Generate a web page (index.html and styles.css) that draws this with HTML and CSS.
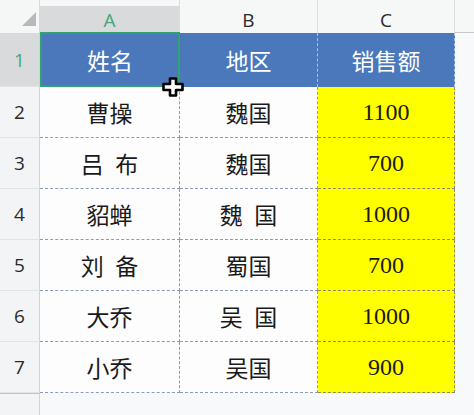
FILE: index.html
```html
<!DOCTYPE html>
<html lang="zh">
<head>
<meta charset="utf-8">
<link rel="stylesheet" href="styles.css">
</head>
<body>
<div class="sheet">
  <div class="corner"><span class="tri"></span></div>
  <div class="colhead sel"><span>A</span></div>
  <div class="colhead"><span>B</span></div>
  <div class="colhead"><span>C</span></div>
  <div class="colhead rest"></div>

  <div class="rowhead sel">1</div>
  <div class="cell head active">姓名</div>
  <div class="cell head">地区</div>
  <div class="cell head">销售额</div>
  <div class="pad"></div>

  <div class="rowhead">2</div>
  <div class="cell">曹操</div>
  <div class="cell">魏国</div>
  <div class="cell num">1100</div>
  <div class="pad"></div>

  <div class="rowhead">3</div>
  <div class="cell">吕&ensp;布</div>
  <div class="cell">魏国</div>
  <div class="cell num">700</div>
  <div class="pad"></div>

  <div class="rowhead">4</div>
  <div class="cell">貂蝉</div>
  <div class="cell">魏&ensp;国</div>
  <div class="cell num">1000</div>
  <div class="pad"></div>

  <div class="rowhead">5</div>
  <div class="cell">刘&ensp;备</div>
  <div class="cell">蜀国</div>
  <div class="cell num">700</div>
  <div class="pad"></div>

  <div class="rowhead">6</div>
  <div class="cell">大乔</div>
  <div class="cell">吴&ensp;国</div>
  <div class="cell num">1000</div>
  <div class="pad"></div>

  <div class="rowhead">7</div>
  <div class="cell">小乔</div>
  <div class="cell">吴国</div>
  <div class="cell num">900</div>
  <div class="pad"></div>

  <div class="rowhead last"></div>
  <div class="foot"></div>
  <div class="foot"></div>
  <div class="foot"></div>
  <div class="pad"></div>

  <svg class="cursor" width="22" height="20" viewBox="0 0 22 20">
    <path d="M8 1.5 H14 V7 H20.5 V13 H14 V18.5 H8 V13 H1.5 V7 H8 Z" fill="#fff" stroke="#000" stroke-width="2.6" stroke-linejoin="round"/>
  </svg>
</div>
</body>
</html>
```
FILE: styles.css
```css
* { box-sizing: border-box; }
html, body { margin: 0; padding: 0; }
body {
  width: 474px;
  height: 415px;
  overflow: hidden;
  background: #f7f8f9;
  font-family: "Liberation Serif", "Noto Sans CJK SC", serif;
}
.sheet {
  position: relative;
  display: grid;
  grid-template-columns: 40px 140px 138px 137px 1fr;
  grid-template-rows: 33px 54px repeat(6, 51px) 1fr;
  width: 474px;
  height: 415px;
}
.corner {
  position: relative;
  background: #f5f6f6;
  border-right: 1px solid #d9d9d9;
}
.tri {
  position: absolute;
  left: 22px;
  top: 12px;
  width: 0;
  height: 0;
  border-left: 14px solid transparent;
  border-bottom: 14px solid #b9b9b9;
}
.colhead {
  display: flex;
  padding-top: 6px;
  background: #f6f7f7;
  border-right: 1px solid #dcdcdc;
  font-family: "Open Sans", "Noto Sans", sans-serif;
  font-size: 19px;
  color: #2a2a2a;
}
.colhead span {
  flex: 1;
  display: flex;
  align-items: center;
  justify-content: center;
}
.colhead.sel span {
  background: #d9dadb;
  color: #46a677;
}
.colhead.rest {
  border-right: none;
  border-bottom: 1px solid #c8c8c8;
}
.rowhead {
  display: flex;
  align-items: center;
  justify-content: center;
  background: #f3f4f5;
  border-right: 1px solid #d2d3d4;
  border-bottom: 1px solid #e2e3e4;
  font-family: "Open Sans", "Noto Sans", sans-serif;
  font-size: 19px;
  color: #2a2a2a;
}
.rowhead.sel {
  background: #d9dadb;
  color: #46a677;
}
.rowhead.last {
  border-top: 1px solid #c4c4c4;
  border-bottom: none;
}
.cell {
  display: flex;
  align-items: center;
  justify-content: center;
  background: #fdfdfe;
  border-right: 1px dashed #8e9bb8;
  border-bottom: 1px dashed #8e9bb8;
  font-size: 23px;
  color: #1a1a1a;
}
.cell.head {
  background: #4a78bb;
  color: #fff;
  border-right: 1px dashed #a9c2e6;
  border-bottom: none;
}
.cell.head.active {
  border: 2px solid #2fa36e;
  margin-top: -1px;
}
.cell.num {
  background: #ffff00;
  font-size: 24px;
  border-right: 1px dashed #8a8a6a;
  border-bottom: 1px dashed #8a8a6a;
}
.pad {
  background: #f8f9fa;
}
.foot {
  background: #f8f9fa;
}
.cursor {
  position: absolute;
  left: 162px;
  top: 77px;
}
```
